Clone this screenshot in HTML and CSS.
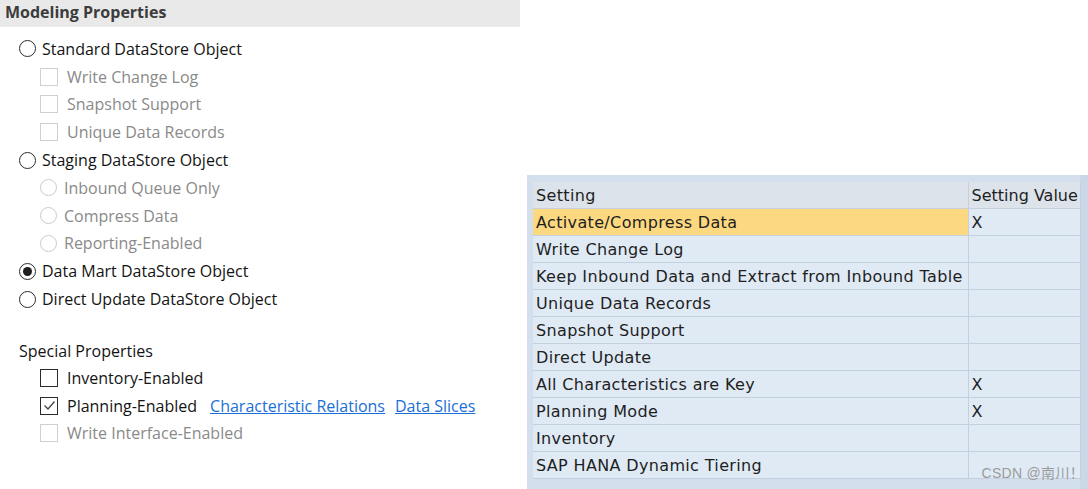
FILE: index.html
```html
<!DOCTYPE html>
<html lang="en">
<head>
    <meta charset="UTF-8">
    <title>Modeling Properties</title>
    <link rel="stylesheet" href="styles.css">
</head>
<body>
<div class="page">

    <div class="props">
        <div class="props-title">Modeling Properties</div>

        <div class="opt"><span class="radio"></span>Standard DataStore Object</div>
        <div class="opt sub off"><span class="box"></span>Write Change Log</div>
        <div class="opt sub off"><span class="box"></span>Snapshot Support</div>
        <div class="opt sub off"><span class="box"></span>Unique Data Records</div>
        <div class="opt"><span class="radio"></span>Staging DataStore Object</div>
        <div class="opt sub off"><span class="radio"></span>Inbound Queue Only</div>
        <div class="opt sub off"><span class="radio"></span>Compress Data</div>
        <div class="opt sub off"><span class="radio"></span>Reporting-Enabled</div>
        <div class="opt"><span class="radio on"></span>Data Mart DataStore Object</div>
        <div class="opt"><span class="radio"></span>Direct Update DataStore Object</div>

        <div class="group-title">Special Properties</div>
        <div class="opt sub"><span class="box"></span>Inventory-Enabled</div>
        <div class="opt sub">
            <span class="box checked">
                <svg width="15" height="15" viewBox="0 0 15 15"><path d="M2.5 7.5 L6 11 L12.5 3.5" fill="none" stroke="#444" stroke-width="1.3"/></svg>
            </span>Planning-Enabled
            <a class="link first" href="#">Characteristic Relations</a>
            <a class="link" href="#">Data Slices</a>
        </div>
        <div class="opt sub off"><span class="box"></span>Write Interface-Enabled</div>
    </div>

    <div class="settings">
        <table class="grid">
            <colgroup><col class="c1"><col class="c2"></colgroup>
            <tr class="head"><th>Setting</th><th>Setting Value</th></tr>
            <tr><td class="sel">Activate/Compress Data</td><td>X</td></tr>
            <tr><td>Write Change Log</td><td></td></tr>
            <tr><td>Keep Inbound Data and Extract from Inbound Table</td><td></td></tr>
            <tr><td>Unique Data Records</td><td></td></tr>
            <tr><td>Snapshot Support</td><td></td></tr>
            <tr><td>Direct Update</td><td></td></tr>
            <tr><td>All Characteristics are Key</td><td>X</td></tr>
            <tr><td>Planning Mode</td><td>X</td></tr>
            <tr><td>Inventory</td><td></td></tr>
            <tr><td>SAP HANA Dynamic Tiering</td><td></td></tr>
        </table>
        <div class="watermark">CSDN @南川！</div>
    </div>

</div>
</body>
</html>
```

FILE: styles.css
```css
body {
    margin: 0;
    background: #fff;
    font-family: "Open Sans", "Noto Sans", sans-serif;
}

.page {
    display: flex;
    width: 1088px;
    height: 489px;
    overflow: hidden;
}

/* --- left panel --- */
.props {
    width: 520px;
    flex: none;
}

.props-title {
    height: 27px;
    background: #e9e9e9;
    color: #3c3c3c;
    font-weight: bold;
    font-size: 16px;
    line-height: 25px;
    padding-left: 5px;
    margin-bottom: 8px;
}

.opt {
    display: flex;
    align-items: center;
    height: 27.8px;
    padding-left: 19px;
    font-size: 16px;
    color: #141414;
    white-space: nowrap;
}

.opt.sub {
    padding-left: 40px;
}

.opt.off {
    color: #8a8a8a;
}

.radio {
    width: 17px;
    height: 17px;
    border: 1px solid #2a2a2a;
    border-radius: 50%;
    margin-right: 6px;
    box-sizing: border-box;
    display: flex;
    align-items: center;
    justify-content: center;
    flex: none;
}

.radio.on::after {
    content: "";
    width: 9px;
    height: 9px;
    border-radius: 50%;
    background: #1e1e1e;
}

.off .radio {
    border-color: #cacaca;
    margin-right: 7px;
}

.box {
    width: 18px;
    height: 18px;
    border: 1px solid #2a2a2a;
    margin-right: 9px;
    box-sizing: border-box;
    display: flex;
    align-items: center;
    justify-content: center;
    flex: none;
}

.off .box {
    border-color: #d0d0d0;
}

.group-title {
    margin-top: 25px;
    padding-left: 19px;
    font-size: 16px;
    color: #141414;
    height: 26px;
    line-height: 26px;
}

.link {
    color: #1a6fd6;
    margin-left: 10px;
    text-decoration: underline;
}

.link.first {
    margin-left: 13px;
}

/* --- settings grid --- */
.settings {
    position: relative;
    margin-top: 175px;
    margin-left: 7px;
    width: 561px;
    height: 314px;
    background: #d3dfec;
    padding: 7px 0 0 6px;
    box-sizing: border-box;
    border-right: 8px solid #c9d7e6;
}

.grid {
    width: 547px;
    table-layout: fixed;
    border-collapse: collapse;
    font-family: "DejaVu Sans", sans-serif;
    font-size: 16px;
    letter-spacing: 0.35px;
    color: #1e1e1e;
}

.grid col.c1 {
    width: 435px;
}

.grid col.c2 {
    width: 112px;
}

.grid td, .grid th {
    height: 26px;
    padding: 0 2px 0 3px;
    text-align: left;
    font-weight: normal;
    border-bottom: 1px solid #c3d0dd;
    border-right: 1px solid #c3d0dd;
    background: #dfeaf5;
    white-space: nowrap;
    overflow: hidden;
}

.grid .head th {
    background: #dde3ea;
    border-bottom: 1px solid #c8d0d8;
}

.grid .head th:last-child {
    letter-spacing: 0;
}

.grid td.sel {
    background: #fcd980;
}

.watermark {
    position: absolute;
    right: -4px;
    bottom: 7px;
    font-family: "Liberation Sans", "Noto Sans CJK SC", sans-serif;
    font-size: 14px;
    letter-spacing: 0.3px;
    color: #9a9a9a;
}
```
